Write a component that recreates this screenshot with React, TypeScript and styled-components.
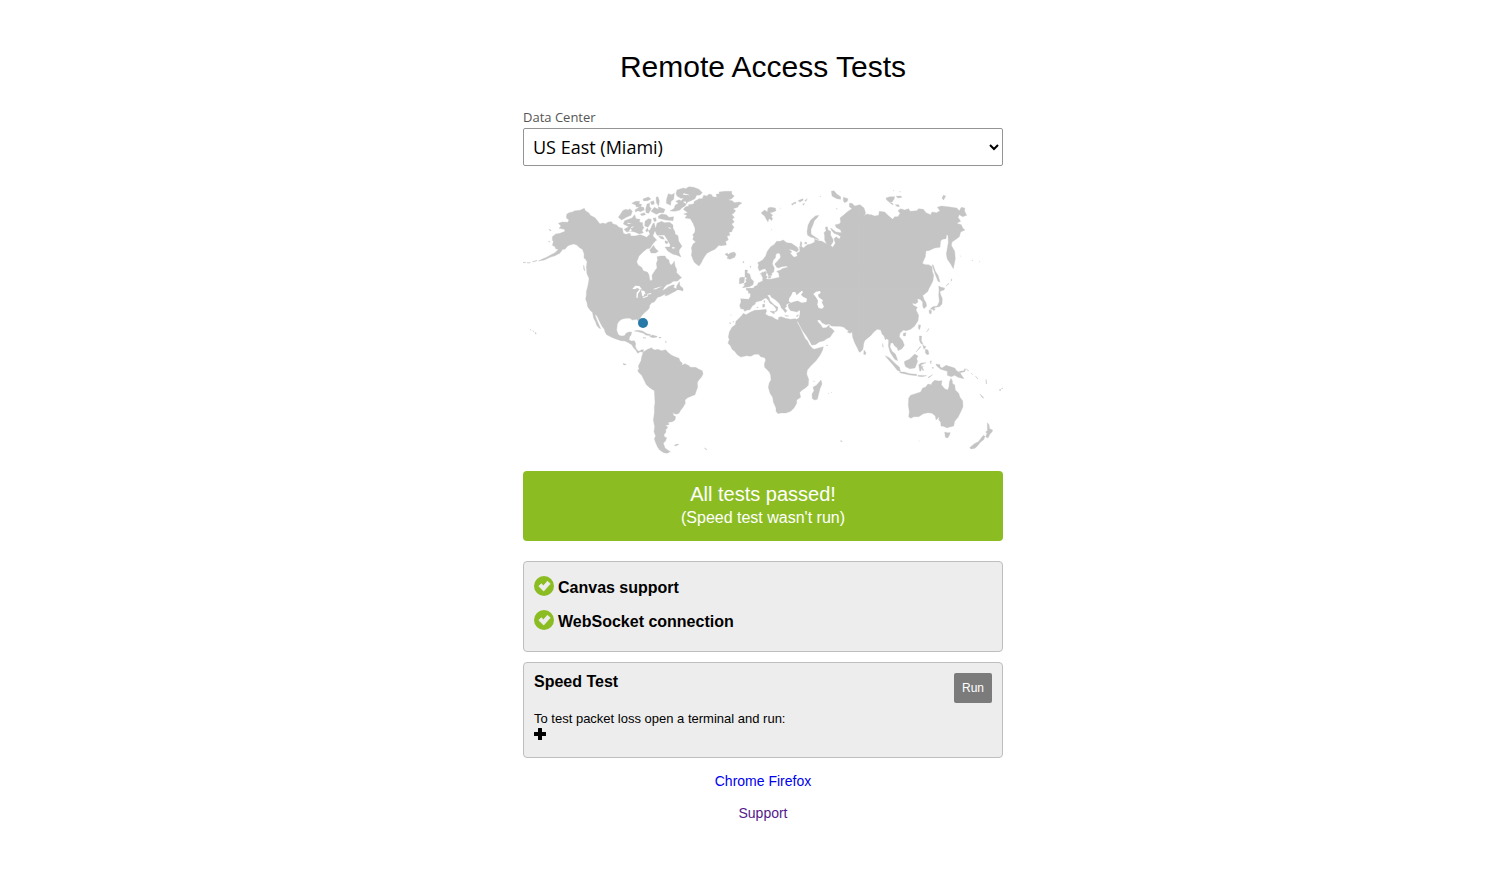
import React from "react";
import styled, { createGlobalStyle } from "styled-components";

const GlobalStyle = createGlobalStyle`
  * { box-sizing: border-box; }
  body {
    margin: 0;
    background: #fff;
    color: #000;
    font-family: "Liberation Sans", Arial, sans-serif;
    font-size: 14px;
  }
`;

const Page = styled.main`
  display: flex;
  flex-direction: column;
  width: 100%;
  max-width: 500px;
  margin: 0 auto;
  padding: 48px 0 48px 20px;
`;

const Title = styled.h1`
  margin: 0;
  font-size: 30px;
  line-height: 38px;
  font-weight: 400;
  text-align: center;
`;

const Field = styled.div`
  display: flex;
  flex-direction: column;
  margin-top: 22px;
  font-family: "Open Sans", sans-serif;
`;

const FieldLabel = styled.label`
  padding-bottom: 2px;
  color: #555;
  font-size: 13px;
  line-height: 18px;
`;

const Select = styled.select`
  width: 100%;
  height: 38px;
  padding: 0 5px;
  border: 1px solid #949494;
  border-radius: 2px;
  background: #fff;
  color: #000;
  font-family: inherit;
  font-size: 18px;
`;

const WorldMap = styled.svg`
  display: block;
  width: 100%;
  height: auto;
  margin: 20px 0 16px;
`;

const Land = styled.path`
  fill: #c4c4c4;
  stroke: #c4c4c4;
  stroke-width: 1;
  stroke-linejoin: round;
`;

const Water = styled.path`
  fill: #fff;
`;

const Banner = styled.section`
  padding: 11px 10px;
  border-radius: 4px;
  background: #8bbd22;
  color: #fff;
  text-align: center;
`;

const BannerTitle = styled.div`
  font-size: 20px;
  line-height: 24px;
`;

const BannerNote = styled.div`
  font-size: 16px;
  line-height: 24px;
`;

const Panel = styled.section`
  padding: 10px;
  border: 1px solid #bebebe;
  border-radius: 4px;
  background: #ededed;
`;

const Checks = styled(Panel)`
  margin: 20px 0 10px;
`;

const CheckList = styled.ul`
  display: flex;
  flex-direction: column;
  gap: 10px;
  margin: 0;
  padding: 4px 0 7px;
  list-style: none;
`;

const CheckItem = styled.li`
  display: flex;
  align-items: flex-start;
  gap: 4px;
  font-size: 16px;
  line-height: 24px;
  font-weight: 700;
`;

const PanelHead = styled.div`
  display: flex;
  justify-content: space-between;
  align-items: flex-start;
`;

const PanelTitle = styled.h2`
  margin: 0;
  font-size: 16px;
  line-height: 18px;
`;

const RunButton = styled.button`
  height: 30px;
  padding: 0 8px;
  border: 0;
  border-radius: 2px;
  background: #7b7b7b;
  color: #fff;
  font-family: inherit;
  font-size: 12px;
`;

const Hint = styled.p`
  margin: 8px 0 0;
  font-size: 13px;
  line-height: 16px;
`;

const ExpandButton = styled.button`
  display: flex;
  align-items: flex-start;
  width: 12px;
  height: 20px;
  padding: 1px 0 0;
  border: 0;
  background: none;
  color: #000;
`;

const Icon = styled.svg`
  display: block;
  flex: none;
`;

const Footer = styled.footer`
  display: flex;
  flex-direction: column;
  gap: 16px;
  margin-top: 15px;
  line-height: 16px;
  text-align: center;
`;

const Link = styled.a<{ $visited?: boolean }>`
  color: ${(p) => (p.$visited ? "#551a8b" : "#0000ee")};
  text-decoration: none;
`;

type Region = { name: string; x: number; y: number; land: string; water?: string };

/* Each region's outline is given from its own origin on the map. */
const regions: Region[] = [
  {
    name: "north-america",
    x: 0,
    y: 0,
    land:
      "M155 103L162 98 172 96 180 92 195 91 203 87 208 85 211 92 222 99 226 106 240 113 248 123 255 132 262 129 272 131 280 126 290 125 293 131 305 135 312 142 322 145 325 160 332 163 345 160 348 168 360 168 375 164 385 167 395 172 405 162 400 152 412 147 414 168 425 180 415 190 405 205 396 206 385 215 372 228 365 246 370 256 380 262 385 272 398 277 402 285 405 302 412 300 411 286 421 270 426 264 424 250 428 240 426 230 436 228 450 228 455 236 462 240 463 248 468 256 474 250 478 243 480 258 485 268 485 278 492 285 500 293 494 297 488 303 475 304 465 311 455 314 448 322 442 332 450 328 460 320 472 315 479 315 475 322 485 327 484 332 465 342 458 346 450 348 452 342 445 345 435 350 428 352 422 360 418 366 410 368 404 376 403 384 398 390 390 397 382 405 376 413 378 425 380 437 375 434 370 424 365 418 352 420 345 415 332 415 320 418 312 424 307 432 305 450 308 460 312 466 320 468 328 467 334 459 342 456 350 456 348 466 344 470 342 480 350 483 358 482 362 490 361 500 366 510 372 514 380 509 386 509 384 517 376 515 368 520 362 510 356 504 350 494 340 488 330 483 318 482 300 476 288 471 275 464 270 456 268 448 262 440 254 425 248 412 243 404 240 404 244 416 249 428 257 446 252 444 245 436 242 426 236 415 232 396 227 393 218 380 216 368 212 358 214 345 214 335 218 320 221 305 222 295 216 282 214 262 216 245 208 232 208 222 202 208 195 204 185 195 176 192 165 195 158 198 150 208 144 208 130 222 118 228 105 232 88 240 70 243 84 236 95 232 108 224 120 218 130 208 122 206 120 200 112 196 115 185 112 180 112 170 122 162 135 160 150 154 148 148 132 145 138 138 130 130 142 126 158 127 162 120 154 114z M24 247l8 0 0 1-8 0z M36 248l10 0 0 1-10 0z M52 245l14-4 0 1-12 4z M102 148l6 2 0 3-5-3z M100 184l5 1-1 2z M206 255l3 14 0 4-3-6z M208 215l2 20-3 0z M222 285l10 14 2 8-9-8z M485 318l8-13 2 12 9 8 0 8-10-3-10-1z M140 212l-7 9-3-3z",
    water:
      "M352 326l9-9 12 1 8 10-7 0-7-4-9 4z M364 353l1-15 9-10 3 1-8 13-1 12z M378 331l10 2 4 10-5 0-1 6-4 0z M384 352l15-6 0 3-14 6z M396 342l12-3 1 3-12 2z M412 328l18-6 12-3-20 9z",
  },
  {
    name: "arctic-canada",
    x: 300,
    y: 0,
    land:
      "M165 93L178 85 180 76 190 70 182 64 200 56 186 48 183 40 186 30 205 24 212 26 222 20 236 22 252 28 262 38 255 45 245 46 240 56 228 62 218 66 210 78 200 84 195 90 180 94z M155 56l5-15 10 3 8-4-2 18-8 6-1 12-13-6z M123 52l6-2 4 12-2 16-7-10z M50 70l12-6 12 0-2 7 8 2-2 7-14 1-2-6z M60 90l14-10 12 2 2 8-12 5-7-3-7 4z M92 88l4-16 8-2 0 10 5 6-8 14-8-2z M84 57l16-6 8 6-10 5-12 1z M108 94l10-12 12 6 0-8 20 8-4 10-12 0-10 5z M106 66l10-4 2 10-8 2z M130 108l10-6 14 2 8 8 14-2-2 12-22-2-22-5z M10 112l7-10 6-10 9-4 8 2 5-4 7 8-4 12-14 6-14 8z M27 148l14-8-16-8 4-10 22-8 8-10 4 12 12 2-2 8 10 2 0 10 4 4-6 10 4 6-12 4-14-6-12-2-12 2z M90 124l10-8 9 2-1 10-9 14-10-4z M92 150l6-6 2 8-6 4z M126 130l14-6 8 4 16-1 10 8 0 10 5 8 2 10 8 4 2 16 10 16-8 10-1 8 6 14-14-6-10-2-16-10-8-12 14 0 2-6-8-14-10-16-22 1-6-14z M104 152l10-22 4 0 4 18-8 18-6-4z M130 168l14 2 4 8-10-2z M104 210l12-14 4 8 10 10-8 5-14 0z M150 182l10 3-4 7-6-4z M76 102l12-4 4 6-12 3z M114 115l8-2 2 10-6 2z",
    water:
      "M206 40l20 6-22-2z M192 58l14-4-8 8z M214 72l-10-6 8-2z M38 128l12 2-12 2z M58 138l-10 4 2 3z M120 182l14 6 2 14-10-6z M40 155l8-10 2 8z M170 148l-10-4 2-3z M172 200l10 4-10 2z",
  },
  {
    name: "greenland",
    x: 300,
    y: 0,
    land:
      "M205 88L212 80 222 78 220 74 236 72 238 64 246 60 252 56 262 56 266 46 276 48 282 42 290 44 293 50 305 52 304 42 313 42 312 36 330 34 350 34 350 42 358 48 350 56 340 60 352 62 358 68 372 66 381 69 372 75 368 82 354 86 362 92 356 100 350 103 358 112 352 118 358 126 350 132 357 142 352 150 350 156 342 156 345 166 336 168 340 180 332 184 334 195 318 197 312 196 300 208 290 212 276 220 270 228 264 238 258 250 252 258 244 252 238 247 233 236 229 225 231 214 229 204 234 192 242 186 233 178 236 170 233 165 240 156 240 145 234 130 226 116 210 114 216 106 206 102 218 98z M330 223l6-4 4 4 8-5 10-2 5 7-4 9-14 6-9-3 3-5z M385 243l2 5-3-3z",
  },
  {
    name: "caribbean",
    x: 300,
    y: 270,
    land:
      "M58 183l10-2 14 2 14 8 12 3-2 3-14-2-6-5-16-5z M104 200l8-5 14 4 0 2-12 2z M84 203l8 0 0 2-8-1z M132 202l6 0 0 2-6 0z M76 160l4 2 0 3z M152 212l2 6-2 0z M24 281l8 2-4 2z",
  },
  {
    name: "hawaii",
    x: 0,
    y: 270,
    land: "M45 179l3 0 0 2z M53 182l3 1 0 2z M60 187l4 2-2 4z",
  },
  {
    name: "south-america",
    x: 300,
    y: 540,
    land:
      "M78 2L80-10 85-24 98-32 110-37 114-32 120-30 128-32 140-28 152-31 160-22 170-14 182-9 192-5 195 3 202 10 200 16 210 11 222 17 226 22 242 22 252 28 262 32 264 42 260 50 250 62 247 68 248 82 244 92 240 104 230 108 218 113 210 120 211 130 204 142 196 152 192 160 184 163 175 160 173 155 175 166 182 170 180 180 172 185 160 187 162 194 151 196 158 201 156 206 152 208 153 216 147 224 148 230 155 233 152 242 145 250 148 258 150 264 158 270 166 275 156 280 146 278 134 270 128 262 122 248 118 236 122 228 117 215 119 200 115 180 118 160 118 140 120 128 118 92 104 83 94 74 86 58 80 46 72 38 68 32 72 26 70 18z M178 255l10-3 3 2-10 4z M268 264l8 4-2 1z M24 11l6 1 4 2-5 0z",
  },
  {
    name: "europe",
    x: 615,
    y: 0,
    land:
      "M85 336L90 330 78 330 80 326 100 325 104 319 112 316 114 309 128 303 128 292 124 286 126 280 136 274 140 278 137 286 142 290 138 297 150 298 165 295 178 292 176 280 170 274 182 270 186 266 203 262 200 258 185 260 176 264 170 262 164 252 172 244 182 232 180 222 176 219 168 222 166 234 160 240 157 252 163 264 161 276 155 280 156 286 146 288 142 280 136 266 128 268 118 273 114 262 116 254 113 248 128 240 137 228 142 214 152 200 162 194 170 184 180 184 190 180 200 188 214 190 232 202 236 210 230 216 218 210 206 208 216 216 210 218 216 226 222 232 232 228 230 220 240 214 238 200 246 200 250 204 262 194 272 192 284 186 284 178 296 182 306 184 320 192 314 180 314 168 312 158 318 152 316 142 322 140 324 150 332 154 332 166 340 180 338 188 332 196 338 202 346 190 342 176 348 170 358 177 362 170 354 164 342 160 334 150 332 144 348 156 364 158 362 150 348 142 346 134 358 132 362 126 360 114 370 106 384 94 396 86 388 80 388 70 396 70 404 78 420 74 432 84 436 98 430 112 436 104 444 102 455 108 455 340 85 340z M120 283l8-8 0 6z M144 290l8-2 0 6-6 1z M242 184l4 4-2 14-4-6z M255 186l6 2-2 4-5-1z M75 270l8 0-2 8 8 4 4 14 8 8-2 10-10 6-22 3 8-8-4-2 8-8-2-6 4-4-6-4 0-10z M58 296l4-4 12 0-2 16-14 4z M124 98l10-8 8 6 2-12 8-2 14 2 2 8-8 4-10 2 8 8-4 4 4 6-4 6-4-6-4 2-2 8-6-10-4-8-8-6z M214 72l10-4-6 8z M220 68l8-2-2 6z M234 62l14-6 2 4-10 6z M248 72l6-2-4 6z M254 62l8-6-4 8z M334 34l8-2 8 10 12 8 0 8-12-2-14-8z M370 52l14 4-2 8-8 4-4-6z M296 106l-10 2-14 12-8 16-3 20 2 10 10 6 20 4-12-8-8-6 0-14 6-14 4-12 10-10z M298 180l-16-5 6-1z M300 48l2 2-2 0z M180 84l2 0-1 1z M154 149l2 0 0 1z M69 246l3 2-2 1z M348 86l4 0-2 2z M90 258l3 2-2 3z",
  },
  {
    name: "mediterranean",
    x: 615,
    y: 330,
    land:
      "M78-5L84 4 91 8 91 20 86 28 75 27 62 26 63 36 59 46 62 56 70 57 74 64 82 60 90 59 97 48 106 42 106 37 116 34 124 32 132 26 138 24 144 30 150 40 158 44 164 50 169 58 164 67 172 62 174 52 164 46 156 38 150 32 148 24 142 16 150 14 154 22 164 28 176 38 181 46 184 54 190 60 196 68 201 62 194 54 200 50 198 44 206 40 212 38 204 44 206 54 212 62 222 64 230 66 240 60 240 72 237 84 230 88 236 100 248 122 262 142 270 155 275 165 286 164 298 156 312 152 320 146 330 142 338 130 343 124 336 116 328 112 328 105 318 113 308 114 302 104 294 96 292 90 300 90 306 98 318 104 328 102 334 108 346 109 360 109 372 112 378 118 386 122 382 126 390 130 396 126 398 142 404 158 412 174 420 187 428 178 430 168 428 156 438 146 450 138 455 134 455-5z M128 43l6-1 0 9-6 1z M131 33l3-2 0 8z M150 64l14 0-2 8z M194 76l12 2-6 1z M228 78l8-4-4 6z M110 52l5-1-3 3z M432 180l6 8-2 6-5-1z M303 270l3 12-6 14-8 32-8 2-7-4-1-14 6-10-3-10 10-6z M318 166l6 0-3 1z M325 310l2 0-1 1z M334 307l2 0-1 1z M280 272l4 4-1 0z M28 98l5 1-3 2z M38 96l4-2-2 3z M32 76l2 0-1 1z",
    water:
      "M206 34l2-10 6-8 4-10 8 0 4 10 8-8 8-6 3 4-6 8 6 6 12 6-2 10-14 2-12-6-12 3-8 3z M280 12l8-7 12-2 2 6-8 5 2 8 12 8 0 6-4-2 8 16-6 6-10-2-4-10 2-12-6-10z",
  },
  {
    name: "africa",
    x: 615,
    y: 330,
    land:
      "M70 70L78 74 92 66 104 61 120 60 138 58 140 64 136 72 146 78 156 80 168 88 175 90 176 82 184 80 196 85 212 88 226 86 234 90 232 98 240 112 248 130 256 146 262 152 268 164 276 174 282 178 296 174 310 170 308 180 300 196 288 212 272 228 262 240 260 252 266 268 265 286 256 294 244 302 239 308 242 322 230 330 230 340 222 354 212 364 198 369 182 369 174 371 168 364 168 354 160 336 158 322 150 310 145 292 148 278 153 270 152 256 148 246 134 232 133 222 137 210 134 203 122 200 116 193 104 193 92 199 80 197 62 201 52 194 44 184 36 178 32 168 24 160 28 148 25 142 28 126 36 112 46 104 48 94 58 84 66 76z",
  },
  {
    name: "east-siberia",
    x: 1035,
    y: 0,
    land:
      "M-5 76L6 80 14 92 16 100 8 118 20 106 34 104 44 108 56 106 58 94 74 96 84 106 98 118 104 110 114 110 120 100 114 92 122 86 134 90 146 86 150 94 170 92 176 86 190 88 198 98 212 104 216 96 230 98 240 92 232 82 244 78 264 80 290 84 298 92 304 82 314 84 314 94 320 106 308 110 298 104 294 112 302 124 290 130 304 134 308 144 315 150 302 156 298 170 288 178 276 186 274 196 284 214 286 236 280 266 272 252 262 238 259 222 262 204 265 188 264 166 260 164 258 176 248 178 242 182 240 202 224 204 206 212 198 212 196 230 187 250 196 254 206 254 216 260 217 274 221 286 219 302 210 320 202 332 190 345-5 345z M216 254l4 2 6 18 8 12 6 20-6-2-10-26z M236 318l8 4 10 2-2 6-8 2-6 4z M258 318l8-8 0 2z M274 296l2 4-3 4z M78 54l12-4 14 0-2 8-6 8-8 0-8-6z M108 49l14-1 4 4-12 2z M88 66l10 4 2 4-6-2z M106 74l10 0 2 6-8-1z M246 54l4-8 7 2-4 8-3 4z M100 31l2 0 0 1z M118 35l3 0 0 1z M301 227l2 2-1 0z M336 240l2 2-2 0z M358 245l2 0 0 1z",
  },
  {
    name: "east-asia",
    x: 1035,
    y: 330,
    land:
      "M-5-5L206-5 204 4 194 12 188 16 192 28 198 38 200 48 192 56 188 48 188 36 180 28 172 26 174 36 166 42 154 38 150 28 156 38 160 46 172 52 168 60 176 76 174 92 164 108 152 118 138 122 130 120 120 130 118 140 128 152 133 166 126 176 114 182 112 174 104 168 98 158 92 160 90 170 96 184 106 192 110 202 113 212 104 208 96 196 90 186 85 168 86 150 80 146 76 150 72 138 66 132 62 120 52 118 44 124 30 138 14 152 10 164 8 178 0 187-5 182z M130 130l8-2-2 10-6 0z M176 104l6 2-3 13-4-4z M238-2l4 16 5 12-1 16-8 8-12 2-6 6-10 0 8-8 14-2 6-14-2-20z M207 60l8 2-2 10-5-2z M218 58l8-2-4 6z M178 138l7 0-1 14 6 12-8-4-4-10z M196 178l8 2 3 12-6 2-5-6z M188 166l10 4-6 8z M182 172l-14 14 13-17z M68 160l2 12-2-2z M76 197l12 6 18 18 12 10 4 14-10-4-16-20-16-18z M118 246l14 0 18 5 20 2 0 4-20-2-28-6z M174 256l26 1-14 3-12-1z M204 262l14-8-12 10z M134 214l14-6 16-16 10 6-4 8 3 8-8 20-16 2-12-6-4-10z M176 224l8-5 14-1-14 6 0 6 6-1-3 4 5 8-4 0-4-6-1 8-4 0z M210 214l4-2-1 10z M216 232l6 2-5 1z M228 222l12 2 0 6 6 4 12-8 26 8 6 8 10 6 12 18-18-4-10-6-10 4-12-4 0-12-20-6-12-10z M298 244l14-2 2-6 3 2-3 7-14 3z M318 236l8 6-2 0z M334 250l4 4-3-2z M346 258l8 8-2 0z M360 312l10 10 0 3-4-3z M378 268l2 14-2-2z M417 300l5-2 0 4z M424 296l5-2-3 3z M205 120l-6 6 8-11z",
  },
  {
    name: "australia",
    x: 1035,
    y: 330,
    land:
      "M146 324L152 316 166 311 182 306 188 294 196 292 204 282 214 284 216 278 224 271 236 273 246 272 244 284 254 296 263 300 267 290 268 276 273 265 277 272 278 282 284 284 286 300 296 310 300 322 308 332 309 350 302 366 294 382 284 394 281 408 266 412 262 414 250 409 243 408 242 396 236 390 238 380 228 390 226 378 216 370 204 368 190 371 176 380 162 380 152 385 146 380 148 366 145 346z M254 426l8 2 9 0-4 10-4 6-7-2z M382 398l5 6 2 12 9 4-2 6-6 6-6 12-7-4 4-10-4-4 5-4 0-14z M370 436l5 3-4 10-10 8-8 10-8 8-12 2-4-4 14-12 12-6z M176 453l2 0z",
  },
  {
    name: "kerguelen",
    x: 615,
    y: 330,
    land: "M361 452l6 1-3 3z",
  },
];

function CheckIcon() {
  return (
    <Icon width="20" height="20" viewBox="0 0 20 20" aria-hidden="true">
      <circle cx="10" cy="10" r="10" fill="#8bbd22" />
      <path
        d="M4.8 10.2l2.4-2.4 2.3 2 3.9-4.5 2.8 2.5-6.5 7.2z"
        fill="#ededed"
        stroke="#ededed"
        strokeWidth=".8"
        strokeLinejoin="round"
      />
    </Icon>
  );
}

export default function App() {
  return (
    <>
      <GlobalStyle />
      <Page>
        <Title>Remote Access Tests</Title>
        <Field>
          <FieldLabel htmlFor="data-center">Data Center</FieldLabel>
          <Select id="data-center" defaultValue="miami">
            <option value="miami">US East (Miami)</option>
          </Select>
        </Field>
        <WorldMap viewBox="24 18 1440 807" role="img" aria-label="World map">
          {regions.map((r) => (
            <g key={r.name} transform={`translate(${r.x} ${r.y})`}>
              <Land d={r.land} />
              {r.water && <Water d={r.water} />}
            </g>
          ))}
          <circle cx="384" cy="429" r="15" fill="#2779a7" />
        </WorldMap>
        <Banner>
          <BannerTitle>All tests passed!</BannerTitle>
          <BannerNote>(Speed test wasn't run)</BannerNote>
        </Banner>
        <Checks>
          <CheckList>
            <CheckItem><CheckIcon />Canvas support</CheckItem>
            <CheckItem><CheckIcon />WebSocket connection</CheckItem>
          </CheckList>
        </Checks>
        <Panel>
          <PanelHead>
            <PanelTitle>Speed Test</PanelTitle>
            <RunButton type="button">Run</RunButton>
          </PanelHead>
          <Hint>To test packet loss open a terminal and run:</Hint>
          <ExpandButton type="button" aria-label="Show command">
            <Icon width="12" height="12" viewBox="0 0 12 12" aria-hidden="true">
              <path d="M4.500 0h3q.5 0 .5.500v3.500h3.500q.5 0 .5.500v3q0 .5-.5.500H8v3.500q0 .5-.5.500h-3q-.5 0-.5-.500V8H.5Q0 8 0 7.500v-3Q0 4 .5 4H4V.500Q4 0 4.500 0z" fill="currentColor" />
            </Icon>
          </ExpandButton>
        </Panel>
        <Footer>
          <div>
            <Link href="#chrome">Chrome</Link> <Link href="#firefox">Firefox</Link>
          </div>
          <div>
            <Link href="#support" $visited>Support</Link>
          </div>
        </Footer>
      </Page>
    </>
  );
}
